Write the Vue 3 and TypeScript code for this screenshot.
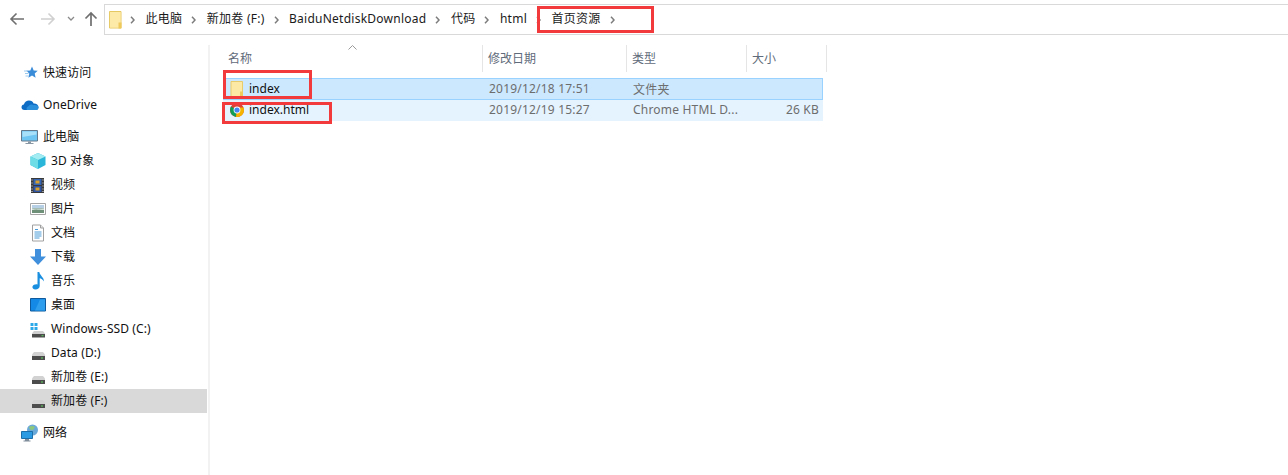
<script setup lang="ts">
interface NavItem {
  label: string
  icon: string
  child?: boolean
  active?: boolean
  gap?: boolean
}

const crumbs: string[] = ['此电脑', '新加卷 (F:)', 'BaiduNetdiskDownload', '代码', 'html', '首页资源']

const navItems: NavItem[] = [
  { label: '快速访问', icon: 'star' },
  { label: 'OneDrive', icon: 'cloud', gap: true },
  { label: '此电脑', icon: 'pc', gap: true },
  { label: '3D 对象', icon: 'cube', child: true },
  { label: '视频', icon: 'film', child: true },
  { label: '图片', icon: 'pic', child: true },
  { label: '文档', icon: 'doc', child: true },
  { label: '下载', icon: 'down', child: true },
  { label: '音乐', icon: 'music', child: true },
  { label: '桌面', icon: 'desk', child: true },
  { label: 'Windows-SSD (C:)', icon: 'sys', child: true },
  { label: 'Data (D:)', icon: 'drive', child: true },
  { label: '新加卷 (E:)', icon: 'drive', child: true },
  { label: '新加卷 (F:)', icon: 'drive', child: true, active: true },
  { label: '网络', icon: 'net', gap: true }
]

const columns: string[] = ['名称', '修改日期', '类型', '大小']
</script>

<template>
  <div class="window">
    <header class="toolbar">
      <div class="nav-buttons">
        <svg class="btn back" width="16" height="14" viewBox="0 0 16 14"><path d="M15 7H2M7.500 1.500 2 7l5.500 5.500" fill="none" stroke="#6f6f6f" stroke-width="1.600"/></svg>
        <svg class="btn forward" width="16" height="14" viewBox="0 0 16 14"><path d="M1 7h13M8.500 1.500 14 7l-5.500 5.500" fill="none" stroke="#d0d0d0" stroke-width="1.600"/></svg>
        <svg class="btn recent" width="8" height="6" viewBox="0 0 8 6"><path d="M1 1l3 3 3-3" fill="none" stroke="#8a8a8a" stroke-width="1.300"/></svg>
        <svg class="btn up" width="14" height="16" viewBox="0 0 14 16"><path d="M7 15V2M1.500 7.500 7 2l5.500 5.500" fill="none" stroke="#6f6f6f" stroke-width="1.700"/></svg>
      </div>
      <div class="address">
        <svg class="addr-folder" width="13" height="18" viewBox="0 0 13 18"><path d="M.5.500h11.500v16.500H.5z" fill="#fbe28f" stroke="#e6c862"/><path d="M.9 1h10.700v15.600H.9z" fill="#fdeaa8"/><path d="M9.500 11.500h3v6h-3z" fill="#eec95c"/></svg>
        <template v-for="crumb in crumbs" :key="crumb">
          <svg class="chev" width="5" height="8" viewBox="0 0 5 8"><path d="M1 .8 4 4 1 7.200" fill="none" stroke="#7d7d7d" stroke-width="1.500"/></svg>
          <span class="crumb">{{ crumb }}</span>
        </template>
        <svg class="chev" width="5" height="8" viewBox="0 0 5 8"><path d="M1 .8 4 4 1 7.200" fill="none" stroke="#7d7d7d" stroke-width="1.500"/></svg>
      </div>
    </header>

    <div class="body">
      <aside class="sidebar">
        <div
          v-for="item in navItems"
          :key="item.label"
          class="nav-row"
          :class="{ child: item.child, active: item.active, gap: item.gap }"
        >
          <span class="nav-icon">
            <svg width="18" height="18" viewBox="0 0 18 18">
              <template v-if="item.icon === 'star'">
                <path d="M11 2.500l1.700 3.900 4 .4-3 2.800.9 4.200-3.600-2.200-3.600 2.200.9-4.200-3-2.800 4-.4z" fill="#3a8cd9"/>
                <path d="M3 7h4M4 9.500h3.500M4.500 12h3" stroke="#9cc9ee" stroke-width="1"/>
              </template>
              <template v-else-if="item.icon === 'cloud'">
                <path d="M3.500 14C1.500 14 .5 12.500 .5 11.200c0-1.500 1-2.500 2.400-2.700C3.600 6 5.700 4.500 8 4.500c2.300 0 4 1.300 4.600 3 2.500-.3 4.900 1.400 4.900 3.700 0 1.600-1.100 2.800-2.700 2.800z" fill="#0f6cc4"/>
                <path d="M6 14c-1-1.500-.3-3.500 1.800-4 1-1.500 3.500-2 5-.8 2-.5 4.700.5 4.700 2.200 0 1.600-1.100 2.600-2.700 2.600z" fill="#2b8fdc"/>
              </template>
              <template v-else-if="item.icon === 'pc'">
                <path d="M.5 2.500h16v10.500H.5z" fill="#6fc5f2" stroke="#64788c"/>
                <path d="M1.500 3.500h14v3L1.500 9z" fill="#a9e0f9"/>
                <path d="M7 13.500h3v1.500H7zM4.500 15h8v1h-8z" fill="#8996a3"/>
              </template>
              <template v-else-if="item.icon === 'cube'">
                <path d="M9 1 16.500 4.500V13L9 17 1.500 13V4.500z" fill="#29b6d8"/>
                <path d="M9 1 16.500 4.500 9 8 1.500 4.500z" fill="#a3ecf2"/>
                <path d="M1.500 4.500 9 8v9L1.500 13z" fill="#6fdde6"/>
              </template>
              <template v-else-if="item.icon === 'film'">
                <path d="M2 2h13v15H2z" fill="#3a3a3a"/>
                <path d="M4.500 3h8v6h-8z" fill="#3565b5"/>
                <path d="M4.500 10h8v6h-8z" fill="#2f56a6"/>
                <path d="M6.500 4.500h4v3h-4zM6.500 11.500h4v3h-4z" fill="#d8a02e"/>
                <path d="M2.500 3.500h1v1h-1zM2.500 6.500h1v1h-1zM2.500 9.500h1v1h-1zM2.500 12.500h1v1h-1zM2.500 15h1v1h-1zM13.500 3.500h1v1h-1zM13.500 6.500h1v1h-1zM13.500 9.500h1v1h-1zM13.500 12.500h1v1h-1zM13.500 15h1v1h-1z" fill="#eee"/>
              </template>
              <template v-else-if="item.icon === 'pic'">
                <path d="M1.500 3.500h15v11h-15z" fill="#fff" stroke="#a5a5a5"/>
                <path d="M3 5h12v3.500H3z" fill="#b6cfe4"/>
                <path d="M3 8.500h12V13H3z" fill="#6f9078"/>
                <path d="M3 8.500c3 1.500 6 1 12 0v1.500H3z" fill="#d5e2dc"/>
              </template>
              <template v-else-if="item.icon === 'doc'">
                <path d="M3.500 1h8l3 3v13h-11z" fill="#fff" stroke="#a0a0a0"/>
                <path d="M11.500 1v3h3" fill="#e4e4e4" stroke="#a0a0a0"/>
                <path d="M6 5.500h3M5.500 8h7M5.500 10h7M5.500 12h7M5.500 14h5" stroke="#4a9ad8" stroke-width="1"/>
              </template>
              <template v-else-if="item.icon === 'down'">
                <path d="M6 1h6v7.500h5L9 17 1 8.500h5z" fill="#3f8fdd"/>
              </template>
              <template v-else-if="item.icon === 'music'">
                <path d="M8.500 0h1.800c.4 3.500 4.700 5 4.700 9.500-1-2-3.200-3.200-4.300-3.300V14c0 2-2 3.500-4.200 3.500S3 16 3.500 14.500 6.500 12 8.500 12.500z" fill="#1a8fe0"/>
              </template>
              <template v-else-if="item.icon === 'desk'">
                <path d="M1.500 2.500h15v12.500h-15z" fill="#148ae6" stroke="#0e5a9c"/>
                <path d="M11 3.500h5v11H6z" fill="#2f9eec"/>
              </template>
              <template v-else-if="item.icon === 'sys'">
                <path d="M1.500 3h3v3h-3zM5.500 3h3v3h-3zM1.500 7h3v3h-3zM5.500 7h3v3h-3z" fill="#2aa8e8"/>
                <path d="M5 11h9l2 2.500v1H3v-1z" fill="#cfcfcf"/>
                <path d="M3 14h13v3.500H3z" fill="#4c4c4c"/>
                <path d="M12.500 15.200h2v1h-2z" fill="#5fd35f"/>
              </template>
              <template v-else-if="item.icon === 'drive'">
                <path d="M5 8h9l2 2.500V12H3v-1.500z" fill="#d2d2d2"/>
                <path d="M3 12h13v4H3z" fill="#4c4c4c"/>
                <path d="M12 13.500h2v1h-2z" fill="#5fd35f"/>
              </template>
              <template v-else-if="item.icon === 'net'">
                <circle cx="11.500" cy="6" r="5.500" fill="#6aa9d8"/>
                <path d="M8 3c2-1.500 4.500-1.500 6 0l-2 3-3-.5z" fill="#8dc77a"/>
                <path d="M.5 7.500h11v7H.5z" fill="#2b9be4" stroke="#1c6fa8"/>
                <path d="M4 15h4v1.500H4zM2.500 16.500h7v1h-7z" fill="#7f8c99"/>
              </template>
            </svg>
          </span>
          <span class="nav-label">{{ item.label }}</span>
        </div>
      </aside>

      <main class="files">
        <svg class="sort" width="9" height="5" viewBox="0 0 9 5"><path d="M.5 4.500l4-4 4 4" fill="none" stroke="#9a9a9a"/></svg>
        <div class="head">
          <div v-for="col in columns" :key="col" class="head-cell">{{ col }}</div>
        </div>

        <div class="file-row selected">
          <div class="cell name">
            <svg width="14" height="17" viewBox="0 0 14 17"><path d="M1 .5h11.500V16H1z" fill="#fde9a6" stroke="#e8cb6a"/><path d="M10 10.500h3v6h-3z" fill="#eec95c"/></svg>
            <span>index</span>
          </div>
          <div class="cell meta">2019/12/18 17:51</div>
          <div class="cell meta">文件夹</div>
          <div class="cell meta right"></div>
        </div>

        <div class="file-row hover">
          <div class="cell name">
            <svg class="chrome" width="14" height="14" viewBox="0 0 14 14">
              <circle cx="7" cy="7" r="7" fill="#db4437"/>
              <path d="M7 7 1 3.500A7 7 0 0 0 6 13.900z" fill="#0f9d58"/>
              <path d="M7 7 6 14A7 7 0 0 0 13.500 4.500H7z" fill="#f4b400"/>
              <circle cx="7" cy="7" r="3.400" fill="#fff"/>
              <circle cx="7" cy="7" r="2.600" fill="#4285f4"/>
            </svg>
            <span>index.html</span>
          </div>
          <div class="cell meta">2019/12/19 15:27</div>
          <div class="cell meta">Chrome HTML D...</div>
          <div class="cell meta right">26 KB</div>
        </div>
      </main>
    </div>

    <div class="mark mark-crumb"></div>
    <div class="mark mark-folder"></div>
    <div class="mark mark-file"></div>
  </div>
</template>

<style scoped>
.window {
  position: relative;
  width: 1288px;
  height: 475px;
  overflow: hidden;
  display: flex;
  flex-direction: column;
  background: #fff;
  color: #1a1a1a;
  font-family: "Noto Sans", "Noto Sans CJK SC", sans-serif;
  font-size: 12px;
}
.toolbar {
  display: flex;
  align-items: flex-start;
  height: 45px;
  padding-top: 4px;
  box-sizing: border-box;
  flex: none;
}
.nav-buttons {
  display: flex;
  align-items: center;
  width: 104px;
  height: 30px;
  flex: none;
}
.btn { flex: none; }
.back { margin-left: 9px; }
.forward { margin-left: 15px; }
.recent { margin-left: 11px; }
.up { margin-left: 9px; }
.address {
  flex: 1;
  display: flex;
  align-items: center;
  height: 31px;
  box-sizing: border-box;
  border: 1px solid #d9d9d9;
  border-right: 0;
  padding-left: 4px;
}
.addr-folder { flex: none; margin-right: 8px; }
.chev { flex: none; margin: 1px 10.5px 0 9px; }
.addr-folder + .chev { margin-left: 0; }
.crumb {
  white-space: nowrap;
  line-height: 16px;
  letter-spacing: 0.25px;
  padding-bottom: 2px;
}
.body {
  flex: 1;
  display: flex;
  min-height: 0;
}
.sidebar {
  width: 210px;
  flex: none;
  box-sizing: border-box;
  padding-top: 16px;
  border-right: 2px solid #f2f2f2;
}
.nav-row {
  display: flex;
  align-items: center;
  height: 24px;
  width: 207px;
  padding-left: 21px;
  box-sizing: border-box;
  color: #111;
}
.nav-row.child { padding-left: 29px; }
.nav-row.gap { margin-top: 8px; }
.nav-row.active { background: #d9d9d9; }
.nav-icon {
  width: 18px;
  height: 18px;
  margin-right: 4px;
  flex: none;
  display: flex;
}
.nav-label {
  white-space: nowrap;
  letter-spacing: 0.1px;
  padding-bottom: 2px;
}
.files {
  position: relative;
  flex: 1;
  padding-left: 13px;
}
.sort {
  position: absolute;
  left: 138px;
  top: 0;
}
.head {
  display: grid;
  grid-template-columns: 260px 144px 120px 80px;
  width: 604px;
  height: 27px;
  margin-bottom: 6px;
}
.head-cell {
  display: flex;
  align-items: center;
  padding: 1px 0 0 5px;
  border-right: 1px solid #e5e5e5;
  color: #5f6b7a;
  line-height: 16px;
}
.file-row {
  display: grid;
  grid-template-columns: 260px 144px 120px 76px;
  width: 600px;
  box-sizing: border-box;
}
.selected {
  height: 22px;
  background: #cce8ff;
  border: 1px solid #99d1ff;
  grid-template-columns: 259px 144px 120px 75px;
}
.hover {
  background: #e5f3ff;
  height: 21px;
}
.cell {
  display: flex;
  align-items: center;
  white-space: nowrap;
  padding: 0 0 2px 6px;
  min-width: 0;
}
.name {
  color: #111;
  gap: 5px;
  padding-left: 7px;
}
.selected .name {
  padding-left: 6px;
}
.name svg {
  margin-top: 2px;
}
.name .chrome {
  margin-top: 0;
}
.meta {
  color: #6d6d6d;
  letter-spacing: 0.2px;
}
.right {
  justify-content: flex-end;
  padding: 0 4px 2px 0;
}
.mark {
  position: absolute;
  box-sizing: border-box;
  border: 3px solid #f23a3c;
  pointer-events: none;
}
.mark-crumb { left: 537px; top: 6px; width: 117px; height: 27px; }
.mark-folder { left: 223px; top: 70px; width: 89px; height: 29px; }
.mark-file { left: 222px; top: 102px; width: 110px; height: 22px; }
</style>
